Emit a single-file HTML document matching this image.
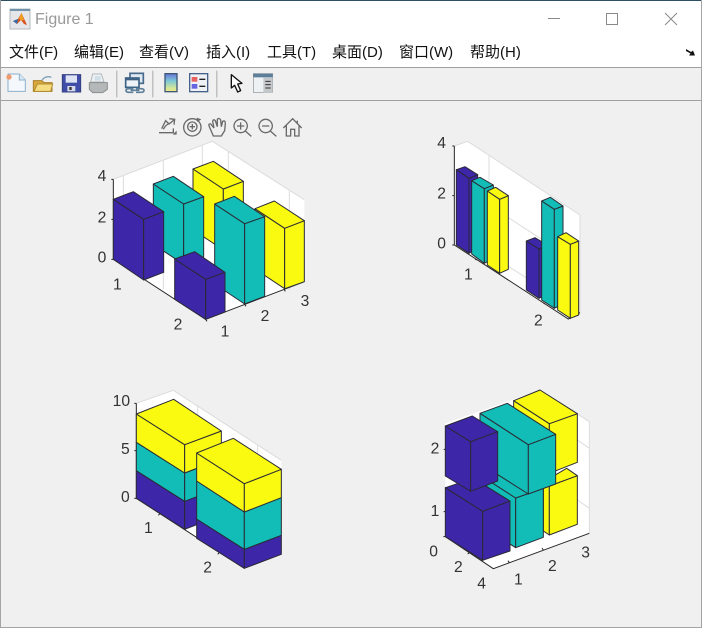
<!DOCTYPE html>
<html><head><meta charset="utf-8"><style>
html,body{margin:0;padding:0;background:#f0f0f0}
#w{position:relative;width:702px;height:628px;overflow:hidden;background:#f0f0f0}
svg{position:absolute;left:0;top:0}
.m{position:absolute;top:44px;font:15px/18px "Liberation Sans","Noto Sans CJK SC",sans-serif;color:#111;white-space:nowrap}
.t{font-family:"Liberation Sans",sans-serif;font-size:47px;fill:#333;text-anchor:middle}
.f polygon{stroke:#2a2a35;stroke-width:3;stroke-linejoin:round}
.b{fill:#3d26a8}.c{fill:#13bdb7}.y{fill:#f9fa0f}
.wall{fill:#fff}
.g{stroke:#dcdcdc;stroke-width:3;fill:none}
.ax{stroke:#262626;stroke-width:3;fill:none}
</style></head><body><div id="w">
<div style="position:absolute;left:0;top:0;width:702px;height:67px;background:#fff"></div>
<div style="position:absolute;left:0;top:67px;width:702px;height:1px;background:#a0a0a0"></div>
<div style="position:absolute;left:0;top:100px;width:702px;height:1px;background:#a0a0a0"></div>
<div style="position:absolute;left:0;top:0;width:702px;height:1px;background:#2f4f66"></div>
<div style="position:absolute;left:0;top:0;width:1px;height:628px;background:#a4a4a4"></div>
<div style="position:absolute;left:701px;top:0;width:1px;height:628px;background:#a4a4a4"></div>
<div style="position:absolute;left:0;top:627px;width:702px;height:1px;background:#a4a4a4"></div>
<div style="position:absolute;left:35px;top:11px;font:16px/18px 'Liberation Sans',sans-serif;color:#999">Figure 1</div>
<div class="m" style="left:9px">文件(F)</div>
<div class="m" style="left:74px">编辑(E)</div>
<div class="m" style="left:139px">查看(V)</div>
<div class="m" style="left:206px">插入(I)</div>
<div class="m" style="left:267px">工具(T)</div>
<div class="m" style="left:332px">桌面(D)</div>
<div class="m" style="left:399px">窗口(W)</div>
<div class="m" style="left:470px">帮助(H)</div>
<svg width="702" height="628" viewBox="0 0 702 628">
<!-- title logo -->
<rect x="10" y="9" width="20" height="20" fill="#e4e6ea" stroke="#b5b8bc"/>
<rect x="10" y="9" width="20" height="2" fill="#6f93ad"/>
<path d="M13 21L18 19L21.500 13L27 25L24 24L21 20L17 24Z" fill="#d9531e"/>
<path d="M13 21L18 19L17 24Z" fill="#2f6fb0"/>
<path d="M19 18.500L21.500 13L24 20L21 20.500Z" fill="#f0a020"/>
<!-- window controls -->
<path d="M548 18.500H560" stroke="#8a8a8a"/>
<rect x="606.500" y="13.500" width="11" height="11" fill="none" stroke="#8a8a8a"/>
<path d="M665 13L677 25M677 13L665 25" stroke="#8a8a8a"/>
<path d="M686 49L691 52L693 50.500L695 55.500L689 55.500L690.500 53.500L686 51Z" fill="#111"/>
<!-- toolbar -->
<g transform="scale(.33333)">
<path d="M24 222H58L76 240V274H24Z" fill="#f4f8fc" stroke="#8db0cc" stroke-width="3"/>
<path d="M58 222V240H76" fill="#dbe8f3" stroke="#8db0cc" stroke-width="3"/>
<circle cx="27" cy="231" r="8" fill="#ee9a6a"/>
<path d="M100 242H126L132 248H156V274H100Z" fill="#d9a83c" stroke="#a8812a" stroke-width="3"/>
<path d="M102 274L112 252H158L152 274Z" fill="#f6dc80" stroke="#b08c30" stroke-width="3"/>
<path d="M126 240Q138 226 154 232" fill="none" stroke="#7fa0b8" stroke-width="4"/>
<path d="M187 224H242V276H187Z" fill="#3f4da8" stroke="#34407f" stroke-width="3"/>
<rect x="197" y="226" width="34" height="22" fill="#dfe4f5"/>
<rect x="202" y="258" width="24" height="16" fill="#d4d8e8"/>
<rect x="208" y="261" width="7" height="9" fill="#333"/>
<path d="M278 222H304L312 246H272Z" fill="#eef2f4" stroke="#b0b6ba" stroke-width="3"/>
<path d="M268 248H322V268L308 278H278L268 268Z" fill="#b4b8b8" stroke="#8a8e8e" stroke-width="3"/>
<rect x="284" y="228" width="18" height="14" fill="#cfdfe7"/>
<rect x="390" y="220" width="40" height="30" fill="#dfe9f2" stroke="#46688a" stroke-width="5"/>
<rect x="377" y="234" width="40" height="28" fill="#eef3f8" stroke="#3f6385" stroke-width="5"/>
<rect x="377" y="234" width="40" height="7" fill="#3f6385"/>
<path d="M400 266H388Q378 266 378 271Q378 277 388 277H400M408 266H422Q432 266 432 271Q432 277 422 277H408M392 271H418" fill="none" stroke="#5e7f99" stroke-width="5"/>
<defs><linearGradient id="cb" x1="0" y1="0" x2="0" y2="1"><stop offset="0" stop-color="#6a74d8"/><stop offset=".4" stop-color="#7cc8d8"/><stop offset=".75" stop-color="#c8e4a0"/><stop offset="1" stop-color="#f6e880"/></linearGradient></defs>
<rect x="495" y="221" width="36" height="54" fill="url(#cb)" stroke="#3e5878" stroke-width="4"/>
<rect x="569" y="221" width="54" height="54" fill="#eef1f6" stroke="#47628a" stroke-width="4"/>
<rect x="575" y="231" width="17" height="14" fill="#e86060"/>
<rect x="575" y="252" width="17" height="14" fill="#6464e0"/>
<path d="M598 238H616M598 259H616" stroke="#222" stroke-width="4"/>
<path d="M694 224V264L704 256L713 276L722 272L713 252L726 250Z" fill="#fff" stroke="#111" stroke-width="4" stroke-linejoin="round"/>
<rect x="760" y="221" width="58" height="56" fill="#eef1f3" stroke="#8a9298" stroke-width="2"/>
<rect x="760" y="221" width="58" height="11" fill="#5d7f9a"/>
<rect x="790" y="232" width="28" height="45" fill="#c4c8ca"/>
<path d="M796 244H812M796 254H812M796 264H812" stroke="#333" stroke-width="3"/>
<path d="M350.500 212V292M458.500 212V292M650.500 212V292" stroke="#a8a8a8" stroke-width="3"/>
<!-- axes toolbar -->
<g fill="none" stroke="#6a6a6a" stroke-width="4">
<path d="M477 398H520V385M485 386L497 362L507 372L522 360M508 356L524 358L522 374M490 388Q498 372 514 368"/>
<path d="M518 404L530 392V404Z" fill="#6a6a6a" stroke="none"/>
<circle cx="577" cy="382" r="26"/><circle cx="577" cy="380" r="14"/><path d="M577 372V388M569 380H585" stroke-width="4"/>
<path d="M590 353L604 358L592 366Z" fill="#6a6a6a" stroke="none"/>
<path d="M640 408L628 380Q624 370 632 372L642 384L638 364Q640 356 646 362L652 380L652 358Q658 352 662 360L664 380L668 364Q676 360 676 370L674 392L664 408Z"/>
<circle cx="722" cy="378" r="20"/><path d="M736 393L754 409M711 378H733M722 367V389"/>
<circle cx="797" cy="378" r="20"/><path d="M811 393L829 409M786 378H808"/>
<path d="M850 384L878 356L905 384M859 376V408H872V388H884V408H897V376M892 362V370"/>
</g>
</g>
<!-- plot 1 -->
<g transform="translate(90,130) scale(.33333)">
<polygon class="wall" points="70,148 367,34 643,209 643,455 347,568 70,388"/>
<path class="g" d="M70,148 367,34 643,209M100,137V400M220,90V478M337,45V290M415,65V120M598,180V480M70,388 367,300"/>
<path class="ax" d="M70,148V388L347,568L643,455"/>
<path class="ax" d="M70,148h-6M70,268h-6M70,388h-6M160,447l-6,-4M347,568l-8,-5M464,523l4,6M582,478l4,6M347,568l4,6"/>
<g class="f">
<g class="y"><polygon points="309,117 400,177 400,360 309,299"/><polygon points="400,177 460,154 460,336 400,360"/><polygon points="309,117 370,94 460,154 400,177"/></g>
<g class="c"><polygon points="190,162 281,222 281,403 190,343"/><polygon points="281,222 341,200 341,380 281,403"/><polygon points="190,162 250,139 341,200 281,222"/></g>
<g class="y"><polygon points="495,236 584,295 584,476 495,417"/><polygon points="584,295 643,272 643,455 584,476"/><polygon points="495,236 553,213 643,272 584,295"/></g>
<g class="b"><polygon points="70,208 161,268 161,450 70,388"/><polygon points="161,268 221,245 221,427 161,450"/><polygon points="70,208 130,185 221,245 161,268"/></g>
<g class="c"><polygon points="374,222 464,281 464,522 374,462"/><polygon points="464,281 524,260 524,499 464,522"/><polygon points="374,222 433,199 524,260 464,281"/></g>
<g class="b"><polygon points="254,387 347,448 347,568 254,508"/><polygon points="347,448 405,427 405,546 347,568"/><polygon points="254,387 314,365 405,427 347,448"/></g>
</g>
<text class="t" x="36" y="153">4</text><text class="t" x="36" y="278">2</text><text class="t" x="36" y="398">0</text>
<text class="t" x="82" y="479">1</text><text class="t" x="264" y="598">2</text>
<text class="t" x="405" y="620">1</text><text class="t" x="525" y="573">2</text><text class="t" x="645" y="528">3</text>
</g>
<!-- plot 2 -->
<g transform="translate(425,130) scale(.33333)">
<polygon class="wall" points="88,48 128,34 465,255 465,548 430,567 88,345"/>
<path class="g" d="M88,48 128,34 465,255M192,78V350M128,183 465,403M128,330 465,548M465,255V548"/>
<path class="ax" d="M88,48V345L430,567L465,548"/>
<path class="ax" d="M88,48h-6M88,197h-6M88,345h-6M155,390l-5,-3M360,522l-5,-3"/>
<g class="f">
<g class="b"><polygon points="94,119 132,145 132,370 94,345"/><polygon points="132,145 158,134 158,355 132,370"/><polygon points="94,119 120,110 158,134 132,145"/></g>
<g class="c"><polygon points="140,152 178,176 178,400 140,372"/><polygon points="178,176 205,165 205,385 178,400"/><polygon points="140,152 165,142 205,165 178,176"/></g>
<g class="y"><polygon points="187,183 224,208 224,430 187,405"/><polygon points="224,208 250,197 250,418 224,430"/><polygon points="187,183 212,172 250,197 224,208"/></g>
<g class="b"><polygon points="304,333 342,357 342,505 304,480"/><polygon points="342,357 368,346 368,493 342,505"/><polygon points="304,333 330,323 368,346 342,357"/></g>
<g class="c"><polygon points="350,213 388,238 388,535 350,510"/><polygon points="388,238 414,228 414,522 388,535"/><polygon points="350,213 376,202 414,228 388,238"/></g>
<g class="y"><polygon points="398,320 436,343 436,565 398,540"/><polygon points="436,343 461,333 461,555 436,565"/><polygon points="398,320 423,308 461,333 436,343"/></g>
</g>
<text class="t" x="50" y="54">4</text><text class="t" x="50" y="206">2</text><text class="t" x="50" y="356">0</text>
<text class="t" x="130" y="448">1</text><text class="t" x="340" y="586">2</text>
</g>
<!-- plot 3 -->
<g transform="translate(100,385) scale(.33333)">
<polygon class="wall" points="109,55 220,16 544,226 544,508 433,550 109,340"/>
<path class="g" d="M109,55 220,16 544,226M293,60V140M473,180V240"/>
<path class="ax" d="M109,55V340L433,550"/>
<path class="ax" d="M109,55h-6M109,197h-6M109,340h-6M180,386l-5,5M358,503l-5,5"/>
<g class="f">
<g class="b"><polygon points="109,257 254,349 254,433 109,340"/><polygon points="254,349 364,307 364,391 254,433"/></g>
<g class="c"><polygon points="109,172 254,264 254,349 109,257"/><polygon points="254,264 364,222 364,307 254,349"/></g>
<g class="y"><polygon points="109,87 254,179 254,264 109,172"/><polygon points="254,179 364,138 364,222 254,264"/><polygon points="109,87 221,43 364,138 254,179"/></g>
<g class="b"><polygon points="290,402 433,493 433,550 290,460"/><polygon points="433,493 544,451 544,508 433,550"/></g>
<g class="c"><polygon points="290,288 433,381 433,493 290,402"/><polygon points="433,381 544,338 544,451 433,493"/></g>
<g class="y"><polygon points="290,204 433,296 433,381 290,288"/><polygon points="433,296 544,253 544,338 433,381"/><polygon points="290,204 400,160 544,253 433,296"/></g>
</g>
<text class="t" x="64" y="63">10</text><text class="t" x="76" y="207">5</text><text class="t" x="76" y="351">0</text>
<text class="t" x="145" y="444">1</text><text class="t" x="323" y="562">2</text>
</g>
<!-- plot 4 -->
<g transform="translate(420,380) scale(.33333)">
<polygon class="wall" points="76,130 360,30 508,125 508,460 220,566 76,470"/>
<path class="g" d="M360,30 508,125M508,125V460M472,180 508,205M472,360 508,385"/>
<path class="ax" d="M76,470L220,566L508,460"/>
<path class="ax" d="M76,470h-6M76,395h-5M76,208h-5M148,518l-5,4M268,548l-4,-6M370,510l-4,-6"/>
<g class="f">
<g class="y"><polygon points="370,306 388,318 388,465 370,453"/><polygon points="388,318 472,287 472,433 388,465"/><polygon points="370,306 440,265 472,287 388,318"/></g>
<g class="y"><polygon points="281,62 388,131 388,280 281,210"/><polygon points="388,131 472,101 472,247 388,280"/><polygon points="281,62 360,30 472,101 388,131"/></g>
<g class="c"><polygon points="200,298 287,354 287,503 200,447"/><polygon points="287,354 370,325 370,472 287,503"/><polygon points="200,298 285,268 370,325 287,354"/></g>
<g class="c"><polygon points="180,100 325,194 325,342 180,250"/><polygon points="325,194 407,163 407,312 325,342"/><polygon points="180,100 262,70 407,163 325,194"/></g>
<g class="b"><polygon points="76,323 188,394 188,541 76,470"/><polygon points="188,394 270,363 270,513 188,541"/><polygon points="76,323 160,295 270,363 188,394"/></g>
<g class="b"><polygon points="76,138 152,185 152,334 76,288"/><polygon points="152,185 233,155 233,303 152,334"/><polygon points="76,138 157,108 233,155 152,185"/></g>
</g>
<text class="t" x="45" y="221">2</text><text class="t" x="45" y="408">1</text><text class="t" x="41" y="529">0</text>
<text class="t" x="115" y="576">2</text><text class="t" x="185" y="626">4</text>
<text class="t" x="295" y="613">1</text><text class="t" x="397" y="573">2</text><text class="t" x="497" y="533">3</text>
</g>
</svg>
</div></body></html>
